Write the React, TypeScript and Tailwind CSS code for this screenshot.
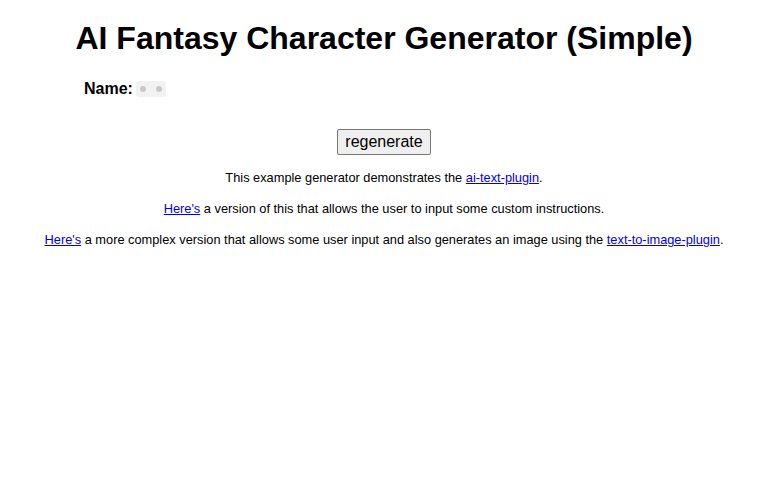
import React from 'react';

const Dots = () => (
  <span className="inline-flex items-center gap-[10px] bg-[#f2f2f2] rounded-[3px] px-[4px] h-[16px] ml-[3px]">
    <span className="w-[6px] h-[6px] rounded-full bg-[#c8c8c8]" />
    <span className="w-[6px] h-[6px] rounded-full bg-[#c8c8c8]" />
  </span>
);

const A = ({ children }: { children: React.ReactNode }) => (
  <a href="#" className="text-[#0000ee] underline">
    {children}
  </a>
);

export default function App() {
  return (
    <div className="min-h-screen bg-white text-black font-['Liberation_Sans',Arial,sans-serif]">
      <h1 className="text-center font-bold text-[32px] leading-[40px] pt-[18px]">
        AI Fantasy Character Generator (Simple)
      </h1>
      <div className="px-[84px] mt-[21px] flex items-center h-[20px]">
        <span className="font-bold text-[16px]">Name:</span>
        <Dots />
      </div>
      <div className="flex justify-center mt-[30px]">
        <button className="text-[16px] leading-[18px] px-[7px] py-[3px] bg-[#efefef] border border-[#767676] rounded-[2px]">
          regenerate
        </button>
      </div>
      <div className="text-center text-[12.8px] leading-[18px] mt-[14px] flex flex-col gap-[13px]">
        <p>
          This example generator demonstrates the <A>ai-text-plugin</A>.
        </p>
        <p>
          <A>Here's</A> a version of this that allows the user to input some custom instructions.
        </p>
        <p>
          <A>Here's</A> a more complex version that allows some user input and also generates an image using the{' '}
          <A>text-to-image-plugin</A>.
        </p>
      </div>
    </div>
  );
}
